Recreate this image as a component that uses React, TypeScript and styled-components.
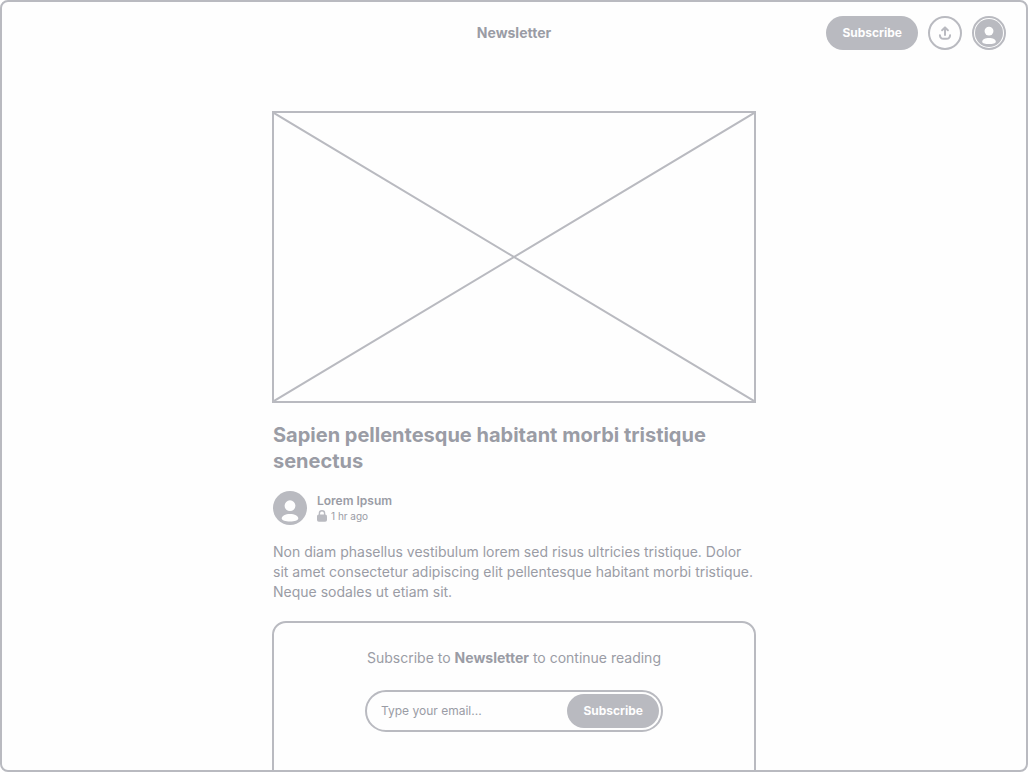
import React from "react";
import styled, { createGlobalStyle } from "styled-components";

const line = "#b9bac0";
const ink = "#9a9ca5";
const paper = "#fefefe";

const GlobalStyle = createGlobalStyle`
  *, *::before, *::after { box-sizing: border-box; }
  body {
    margin: 0;
    background: #ffffff;
    color: ${ink};
    font-family: Inter, "Liberation Sans", sans-serif;
    font-size: 14px;
    line-height: 20px;
  }
  button, input { font: inherit; color: inherit; }
`;

const Frame = styled.div`
  height: 100vh;
  overflow: hidden;
  border: 2px solid ${line};
  border-radius: 8px;
  background: ${paper};
`;

const TopBar = styled.header`
  display: grid;
  grid-template-columns: 1fr auto 1fr;
  align-items: center;
  padding: 14px 20px;
`;

const Brand = styled.a`
  grid-column: 2;
  color: inherit;
  font-weight: 700;
  text-decoration: none;
`;

const Actions = styled.div`
  display: flex;
  justify-content: flex-end;
  gap: 10px;
`;

const PillButton = styled.button`
  flex: none;
  height: 34px;
  padding: 0 16px;
  border: 0;
  border-radius: 17px;
  background: ${line};
  color: ${paper};
  font-size: 12px;
  font-weight: 700;
  cursor: pointer;
`;

const RoundButton = styled.button`
  display: flex;
  align-items: center;
  justify-content: center;
  width: 34px;
  height: 34px;
  padding: 0;
  border: 2px solid ${line};
  border-radius: 50%;
  background: ${paper};
  color: ${line};
  cursor: pointer;
`;

const Article = styled.main`
  max-width: 484px;
  margin: 47px auto 0;
`;

const Picture = styled.svg`
  display: block;
  width: 100%;
  height: 292px;
  border: 2px solid ${line};
`;

const Copy = styled.div`
  padding: 19px 1px;
`;

const Title = styled.h1`
  margin: 0 0 17px;
  font-size: 20px;
  line-height: 26px;
  font-weight: 700;
`;

const Byline = styled.div`
  display: flex;
  align-items: center;
  gap: 10px;
  margin-bottom: 17px;
`;

const Author = styled.div`
  font-size: 12px;
  line-height: 16px;
  font-weight: 600;
`;

const Meta = styled.div`
  display: flex;
  align-items: center;
  gap: 4px;
  font-size: 10px;
  line-height: 14px;
`;

const Intro = styled.p`
  margin: 0;
`;

const Paywall = styled.section`
  display: flex;
  flex-direction: column;
  align-items: center;
  gap: 22px;
  height: 292px;
  padding: 25px 20px;
  border: 2px solid ${line};
  border-radius: 14px;
`;

const Prompt = styled.p`
  margin: 0;

  strong { font-weight: 700; }
`;

const SignUp = styled.form`
  display: flex;
  align-items: center;
  width: 100%;
  max-width: 298px;
  height: 42px;
  padding: 0 2px 0 14px;
  border: 2px solid ${line};
  border-radius: 21px;
`;

const EmailInput = styled.input`
  flex: 1;
  min-width: 0;
  padding: 0;
  border: 0;
  outline: 0;
  background: transparent;
  font-size: 12px;

  &::placeholder { color: ${ink}; opacity: 1; }
`;

function Avatar({ size }: { size: number }) {
  return (
    <svg width={size} height={size} viewBox="0 0 34 34" aria-hidden="true">
      <circle cx="17" cy="17" r="17" fill={line} />
      <circle cx="17" cy="14.7" r="5.4" fill={paper} />
      <path
        d="M8.7 27.5c0-2.6 3.6-4.5 8.3-4.5s8.3 1.9 8.3 4.5c0 1.7-3.8 3-8.3 3S8.7 29.2 8.7 27.5z"
        fill={paper}
      />
    </svg>
  );
}

function ShareIcon() {
  return (
    <svg width="14" height="14" viewBox="0 0 14 14" fill="none" stroke="currentColor" strokeWidth="2" strokeLinecap="round" strokeLinejoin="round" aria-hidden="true">
      <path d="M7 9V1.5M4.1 4.2L7 1.4l2.9 2.8" />
      <path d="M1.9 9.3a3.7 3.7 0 0 0 3.7 3.5h2.8a3.7 3.7 0 0 0 3.7-3.5" />
    </svg>
  );
}

function LockIcon() {
  return (
    <svg width="10" height="12" viewBox="0 0 10 12" fill="none" aria-hidden="true">
      <path d="M2.4 5.5V3.3a2.6 2.6 0 0 1 5.2 0v2.2" stroke={line} strokeWidth="1.4" />
      <rect y="4.4" width="10" height="7.4" rx="1.8" fill={line} />
    </svg>
  );
}

export default function App() {
  return (
    <>
      <GlobalStyle />
      <Frame>
        <TopBar>
          <Brand href="#">Newsletter</Brand>
          <Actions>
            <PillButton type="button">Subscribe</PillButton>
            <RoundButton type="button" aria-label="Share">
              <ShareIcon />
            </RoundButton>
            <RoundButton type="button" aria-label="Account">
              <Avatar size={28} />
            </RoundButton>
          </Actions>
        </TopBar>
        <Article>
          <Picture viewBox="0 0 480 288" preserveAspectRatio="none" role="img" aria-label="Article picture">
            <path d="M0 0L480 288M480 0L0 288" stroke={line} strokeWidth="2" />
          </Picture>
          <Copy>
            <Title>Sapien pellentesque habitant morbi tristique senectus</Title>
            <Byline>
              <Avatar size={34} />
              <div>
                <Author>Lorem Ipsum</Author>
                <Meta>
                  <LockIcon />
                  <span>1 hr ago</span>
                </Meta>
              </div>
            </Byline>
            <Intro>
              Non diam phasellus vestibulum lorem sed risus ultricies tristique. Dolor sit amet
              consectetur adipiscing elit pellentesque habitant morbi tristique. Neque sodales ut
              etiam sit.
            </Intro>
          </Copy>
          <Paywall>
            <Prompt>
              Subscribe to <strong>Newsletter</strong> to continue reading
            </Prompt>
            <SignUp onSubmit={(event) => event.preventDefault()}>
              <EmailInput type="email" placeholder="Type your email..." aria-label="Email address" />
              <PillButton type="submit">Subscribe</PillButton>
            </SignUp>
          </Paywall>
        </Article>
      </Frame>
    </>
  );
}
